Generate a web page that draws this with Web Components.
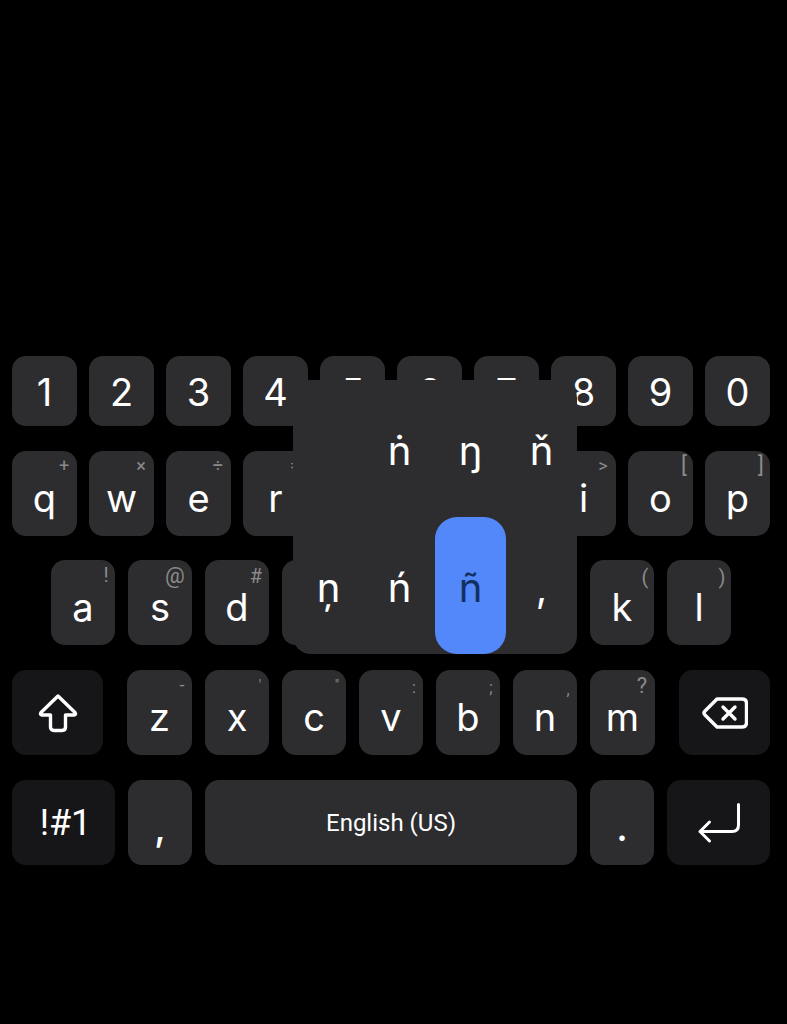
<!DOCTYPE html>
<html lang="en">
<head>
<meta charset="utf-8">
<title>Keyboard</title>
<style>
  html, body { margin: 0; background: #000; }
  body { width: 787px; height: 1024px; overflow: hidden; }
</style>
</head>
<body>

<template id="key-tpl">
  <style>
    :host {
      display: flex;
      flex: none;
      position: relative;
      box-sizing: border-box;
      width: var(--w, 64px);
      height: 85px;
      align-items: center;
      justify-content: center;
      padding-top: 8px;
      background: #2d2d2f;
      border-radius: 14px;
      color: #fff;
      font: 380 38px/1 Inter, "Liberation Sans", sans-serif;
    }
    :host([fn]) { background: #161618; padding-top: 0; }
    :host([digit]) { height: 70px; padding-top: 1px; }
    .hint {
      position: absolute;
      top: var(--ht, 5px);
      right: var(--hr, 1px);
      width: 24px;
      text-align: center;
      color: #8a8a8a;
      font: 400 var(--hs, 18px)/20px Roboto, sans-serif;
    }
  </style>
  <span class="hint"></span>
  <slot></slot>
</template>

<template id="row-tpl">
  <style>
    :host { display: flex; gap: 13px; }
    :host([tight]) { gap: 12px; }
    :host([indent]) { padding-left: 39px; }
    :host([split]) { justify-content: space-between; }
  </style>
  <slot></slot>
</template>

<template id="group-tpl">
  <style>:host { display: flex; gap: 13px; }</style>
  <slot></slot>
</template>

<template id="popup-tpl">
  <style>
    :host {
      position: absolute;
      left: 281px;
      top: 24px;
      width: 284px;
      height: 274px;
      display: grid;
      grid-template-columns: repeat(4, 71px);
      grid-template-rows: repeat(2, 137px);
      background: #2d2d2f;
      border-radius: 18px;
      color: #fff;
      font: 380 40px/1 Inter, "Liberation Sans", sans-serif;
    }
  </style>
  <slot></slot>
</template>

<template id="cell-tpl">
  <style>
    :host {
      display: flex;
      align-items: center;
      justify-content: center;
      padding-top: 5px;
      box-sizing: border-box;
    }
    :host([active]) {
      background: #5388fb;
      border-radius: 22px;
      color: #12305f;
    }
  </style>
  <slot></slot>
</template>

<template id="keyboard-tpl">
  <style>
    :host {
      display: flex;
      flex-direction: column;
      position: relative;
      width: 758px;
      margin: 356px 0 0 12px;
    }
    ::slotted(kb-row:nth-child(1)) { margin-bottom: 25px; }
    ::slotted(kb-row:nth-child(2)) { margin-bottom: 24px; }
    ::slotted(kb-row:nth-child(3)) { margin-bottom: 25px; }
    ::slotted(kb-row:nth-child(4)) { margin-bottom: 25px; }
  </style>
  <slot></slot>
</template>

<kb-keyboard>
  <kb-row tight>
    <kb-key digit style="--w:65px">1</kb-key>
    <kb-key digit style="--w:65px">2</kb-key>
    <kb-key digit style="--w:65px">3</kb-key>
    <kb-key digit style="--w:65px">4</kb-key>
    <kb-key digit style="--w:65px">5</kb-key>
    <kb-key digit style="--w:65px">6</kb-key>
    <kb-key digit style="--w:65px">7</kb-key>
    <kb-key digit style="--w:65px">8</kb-key>
    <kb-key digit style="--w:65px">9</kb-key>
    <kb-key digit style="--w:65px">0</kb-key>
  </kb-row>
  <kb-row tight>
    <kb-key hint="+" style="--w:65px">q</kb-key>
    <kb-key hint="×" style="--w:65px">w</kb-key>
    <kb-key hint="÷" style="--w:65px">e</kb-key>
    <kb-key hint="=" style="--w:65px">r</kb-key>
    <!-- t, y, u sit fully behind the popup -->
    <kb-key style="--w:65px"></kb-key>
    <kb-key style="--w:65px"></kb-key>
    <kb-key style="--w:65px"></kb-key>
    <kb-key hint="&gt;" style="--w:65px">i</kb-key>
    <kb-key hint="[" style="--w:65px;--hr:-3px;--hs:22px">o</kb-key>
    <kb-key hint="]" style="--w:65px;--hr:-3px;--hs:22px">p</kb-key>
  </kb-row>
  <kb-row indent>
    <kb-key hint="!" style="--hr:-3px;--hs:20px">a</kb-key>
    <kb-key hint="@" style="--hs:22px;--hr:5px;--ht:6px">s</kb-key>
    <kb-key hint="#" style="--hs:20px;--ht:6px">d</kb-key>
    <!-- f, g, h, j sit fully behind the popup -->
    <kb-key></kb-key>
    <kb-key></kb-key>
    <kb-key></kb-key>
    <kb-key></kb-key>
    <kb-key hint="(" style="--hr:-3px;--hs:20px;--ht:7px">k</kb-key>
    <kb-key hint=")" style="--hr:-3px;--hs:20px;--ht:7px">l</kb-key>
  </kb-row>
  <kb-row split>
    <kb-key fn style="--w:91px" aria-label="Shift">
      <svg width="40" height="40" viewBox="0 0 40 40" fill="none" stroke="#fff" stroke-width="3.4" stroke-linejoin="round"><path d="M20 3 L37 19.5 Q38.5 21.5 36 22 H27.5 V34 Q27.5 37.5 24 37.5 H16 Q12.5 37.5 12.5 34 V22 H4 Q1.5 21.5 3 19.5 Z"/></svg>
    </kb-key>
    <kb-group>
      <kb-key hint="-" style="--w:65px;--hr:-2px">z</kb-key>
      <kb-key hint="'" style="--hs:14px;--hr:-3px">x</kb-key>
      <kb-key hint="&quot;" style="--hs:14px;--hr:-3px">c</kb-key>
      <kb-key hint=":" style="--hs:16px;--hr:-3px;--ht:8px">v</kb-key>
      <kb-key hint=";" style="--hs:16px;--hr:-3px;--ht:8px">b</kb-key>
      <kb-key hint="," style="--hs:16px;--hr:-3px;--ht:10px">n</kb-key>
      <kb-key hint="?" style="--w:65px;--hs:22px;--ht:6px">m</kb-key>
    </kb-group>
    <kb-key fn style="--w:91px" aria-label="Backspace">
      <svg width="46" height="34" viewBox="0 0 46 34" fill="none" stroke="#fff" stroke-width="3.4" stroke-linecap="round" stroke-linejoin="round"><path d="M15 3 H40 Q44.5 3 44.5 7.5 V26.5 Q44.5 31 40 31 H15 L3 19 Q1 17 3 15 Z"/><path d="M21 11 L33 23 M33 11 L21 23"/></svg>
    </kb-key>
  </kb-row>
  <kb-row>
    <kb-key fn style="--w:103px;padding:1px 0 0 4px;font:400 36px/1 Roboto,sans-serif">!#1</kb-key>
    <kb-key style="font-weight:450">,</kb-key>
    <kb-key style="--w:372px;padding-top:1px;font:400 24px/1 Roboto,sans-serif">English (US)</kb-key>
    <kb-key style="font-weight:450">.</kb-key>
    <kb-key fn style="--w:103px" aria-label="Enter">
      <svg width="46" height="44" viewBox="0 0 46 44" fill="none" stroke="#fff" stroke-width="3" stroke-linecap="round" stroke-linejoin="round"><path d="M42.5 3.5 V24 Q42.5 30.5 36 30.5 H4 M13.5 21 L4 30.5 L13.5 40"/></svg>
    </kb-key>
  </kb-row>
  <kb-popup>
    <kb-cell></kb-cell>
    <kb-cell>ṅ</kb-cell>
    <kb-cell>ŋ</kb-cell>
    <kb-cell>ň</kb-cell>
    <kb-cell>ņ</kb-cell>
    <kb-cell>ń</kb-cell>
    <kb-cell active>ñ</kb-cell>
    <kb-cell>,</kb-cell>
  </kb-popup>
</kb-keyboard>

<script>
  function shadowFrom(el, id) {
    const root = el.attachShadow({ mode: "open" });
    root.appendChild(document.getElementById(id).content.cloneNode(true));
    return root;
  }

  class KbKey extends HTMLElement {
    constructor() {
      super();
      this.root = shadowFrom(this, "key-tpl");
    }
    connectedCallback() {
      const hint = this.root.querySelector(".hint");
      if (!hint) return;
      if (this.hasAttribute("hint")) hint.textContent = this.getAttribute("hint");
      else hint.remove();
    }
  }

  class KbRow extends HTMLElement {
    constructor() { super(); shadowFrom(this, "row-tpl"); }
  }
  class KbGroup extends HTMLElement {
    constructor() { super(); shadowFrom(this, "group-tpl"); }
  }
  class KbPopup extends HTMLElement {
    constructor() { super(); shadowFrom(this, "popup-tpl"); }
  }
  class KbCell extends HTMLElement {
    constructor() { super(); shadowFrom(this, "cell-tpl"); }
  }
  class KbKeyboard extends HTMLElement {
    constructor() { super(); shadowFrom(this, "keyboard-tpl"); }
  }

  customElements.define("kb-key", KbKey);
  customElements.define("kb-row", KbRow);
  customElements.define("kb-group", KbGroup);
  customElements.define("kb-popup", KbPopup);
  customElements.define("kb-cell", KbCell);
  customElements.define("kb-keyboard", KbKeyboard);
</script>
</body>
</html>
